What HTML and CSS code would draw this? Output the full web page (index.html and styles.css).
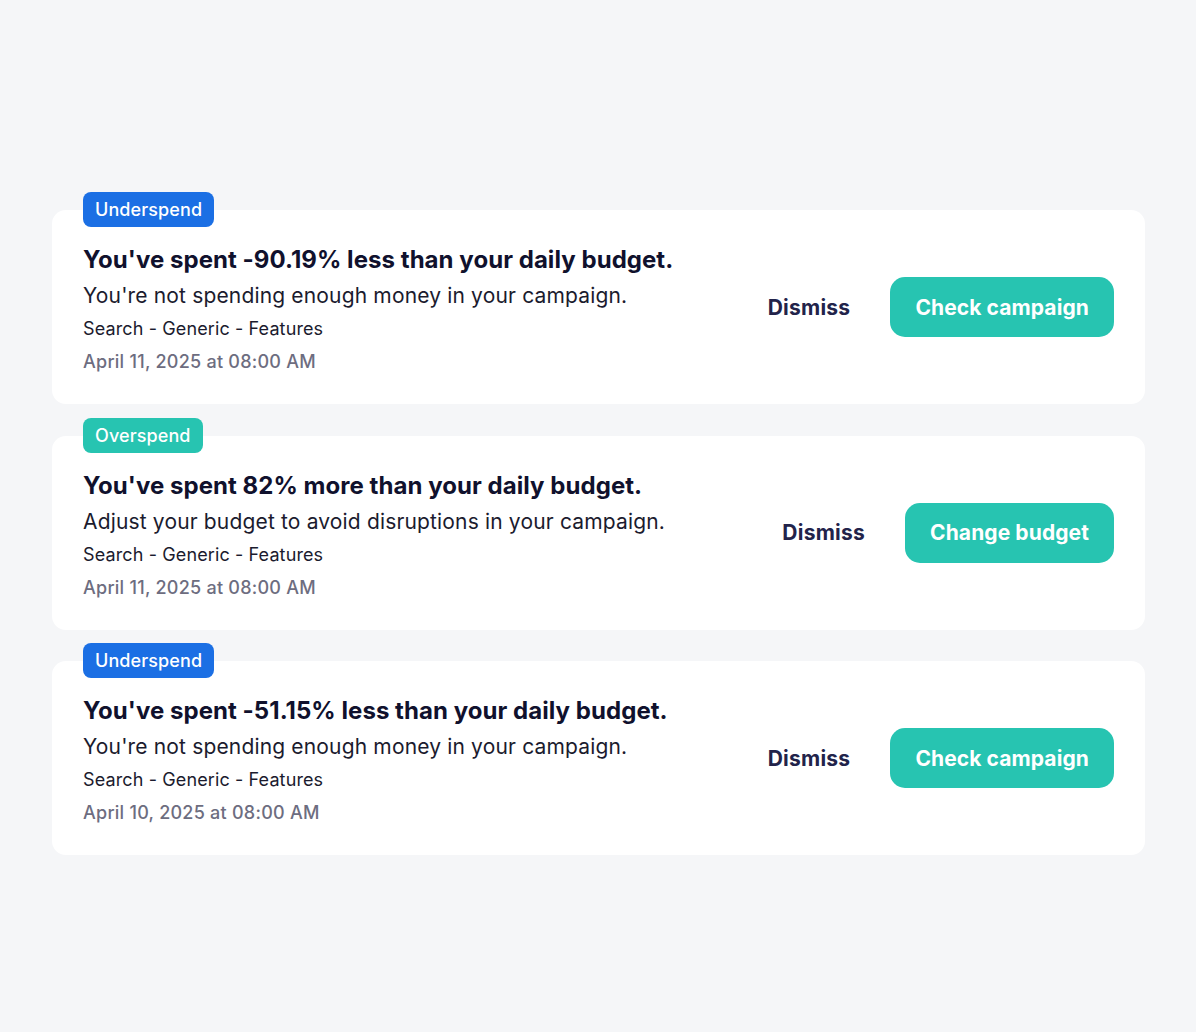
FILE: index.html
```html
<!DOCTYPE html>
<html lang="en">
<head>
<meta charset="utf-8">
<title>Budget alerts</title>
<link rel="stylesheet" href="styles.css">
</head>
<body>
<main class="list">
  <section class="alert">
    <span class="badge badge-under">Underspend</span>
    <div class="card">
      <div class="info">
        <h2 class="title">You've spent -90.19% less than your daily budget.</h2>
        <p class="desc">You're not spending enough money in your campaign.</p>
        <p class="campaign">Search - Generic - Features</p>
        <p class="date">April 11, 2025 at 08:00 AM</p>
      </div>
      <div class="actions">
        <button class="dismiss">Dismiss</button>
        <button class="primary">Check campaign</button>
      </div>
    </div>
  </section>
  <section class="alert">
    <span class="badge badge-over">Overspend</span>
    <div class="card">
      <div class="info">
        <h2 class="title">You've spent 82% more than your daily budget.</h2>
        <p class="desc">Adjust your budget to avoid disruptions in your campaign.</p>
        <p class="campaign">Search - Generic - Features</p>
        <p class="date">April 11, 2025 at 08:00 AM</p>
      </div>
      <div class="actions">
        <button class="dismiss">Dismiss</button>
        <button class="primary">Change budget</button>
      </div>
    </div>
  </section>
  <section class="alert">
    <span class="badge badge-under">Underspend</span>
    <div class="card">
      <div class="info">
        <h2 class="title">You've spent -51.15% less than your daily budget.</h2>
        <p class="desc">You're not spending enough money in your campaign.</p>
        <p class="campaign">Search - Generic - Features</p>
        <p class="date">April 10, 2025 at 08:00 AM</p>
      </div>
      <div class="actions">
        <button class="dismiss">Dismiss</button>
        <button class="primary">Check campaign</button>
      </div>
    </div>
  </section>
</main>
</body>
</html>
```
FILE: styles.css
```css
* { box-sizing: border-box; }
html, body { margin: 0; padding: 0; }
body {
  background: #f5f6f8;
  font-family: Inter, "Noto Sans", "Liberation Sans", sans-serif;
  color: #13132a;
  width: 1196px;
  height: 1032px;
  overflow: hidden;
}
.list {
  padding: 192px 51px 0 52px;
  display: flex;
  flex-direction: column;
  gap: 13.5px;
}
.alert {
  display: flex;
  flex-direction: column;
  align-items: flex-start;
}
.badge {
  position: relative;
  z-index: 1;
  margin-left: 31px;
  height: 35px;
  padding: 0 12px;
  border-radius: 8px;
  color: #fff;
  font-size: 18px;
  font-weight: 500;
  line-height: 35px;
  letter-spacing: 0.1px;
}
.badge-under { background: #1b6fe4; }
.badge-over { background: #27c4b1; }
.card {
  margin-top: -17px;
  width: 100%;
  background: #fff;
  border-radius: 14px;
  padding: 32px 31px 27px;
  display: flex;
  align-items: center;
  justify-content: space-between;
}
.info p, .info h2 { margin: 0; }
.title {
  font-size: 24px;
  font-weight: 700;
  line-height: 36px;
  color: #10112d;
  letter-spacing: 0.05px;
}
.desc {
  font-size: 21px;
  line-height: 36px;
  color: #1b1b2e;
  letter-spacing: 0.16px;
}
.campaign {
  font-size: 18px;
  line-height: 30px;
  color: #1b1b2e;
  letter-spacing: 0.12px;
}
.date {
  margin-top: 3px !important;
  font-size: 18px;
  font-weight: 500;
  line-height: 30px;
  color: #6d6d80;
  letter-spacing: 0.25px;
}
.actions {
  display: flex;
  align-items: center;
  gap: 40px;
  padding-bottom: 5px;
}
button {
  font-family: inherit;
  border: none;
  cursor: pointer;
}
.dismiss {
  background: none;
  padding: 0;
  font-size: 21px;
  font-weight: 700;
  color: #22234a;
  letter-spacing: 0.25px;
}
.primary {
  height: 60px;
  padding: 0 25px;
  border-radius: 15px;
  background: #27c4b1;
  color: #fff;
  font-size: 21px;
  font-weight: 700;
  letter-spacing: 0.1px;
}
```
